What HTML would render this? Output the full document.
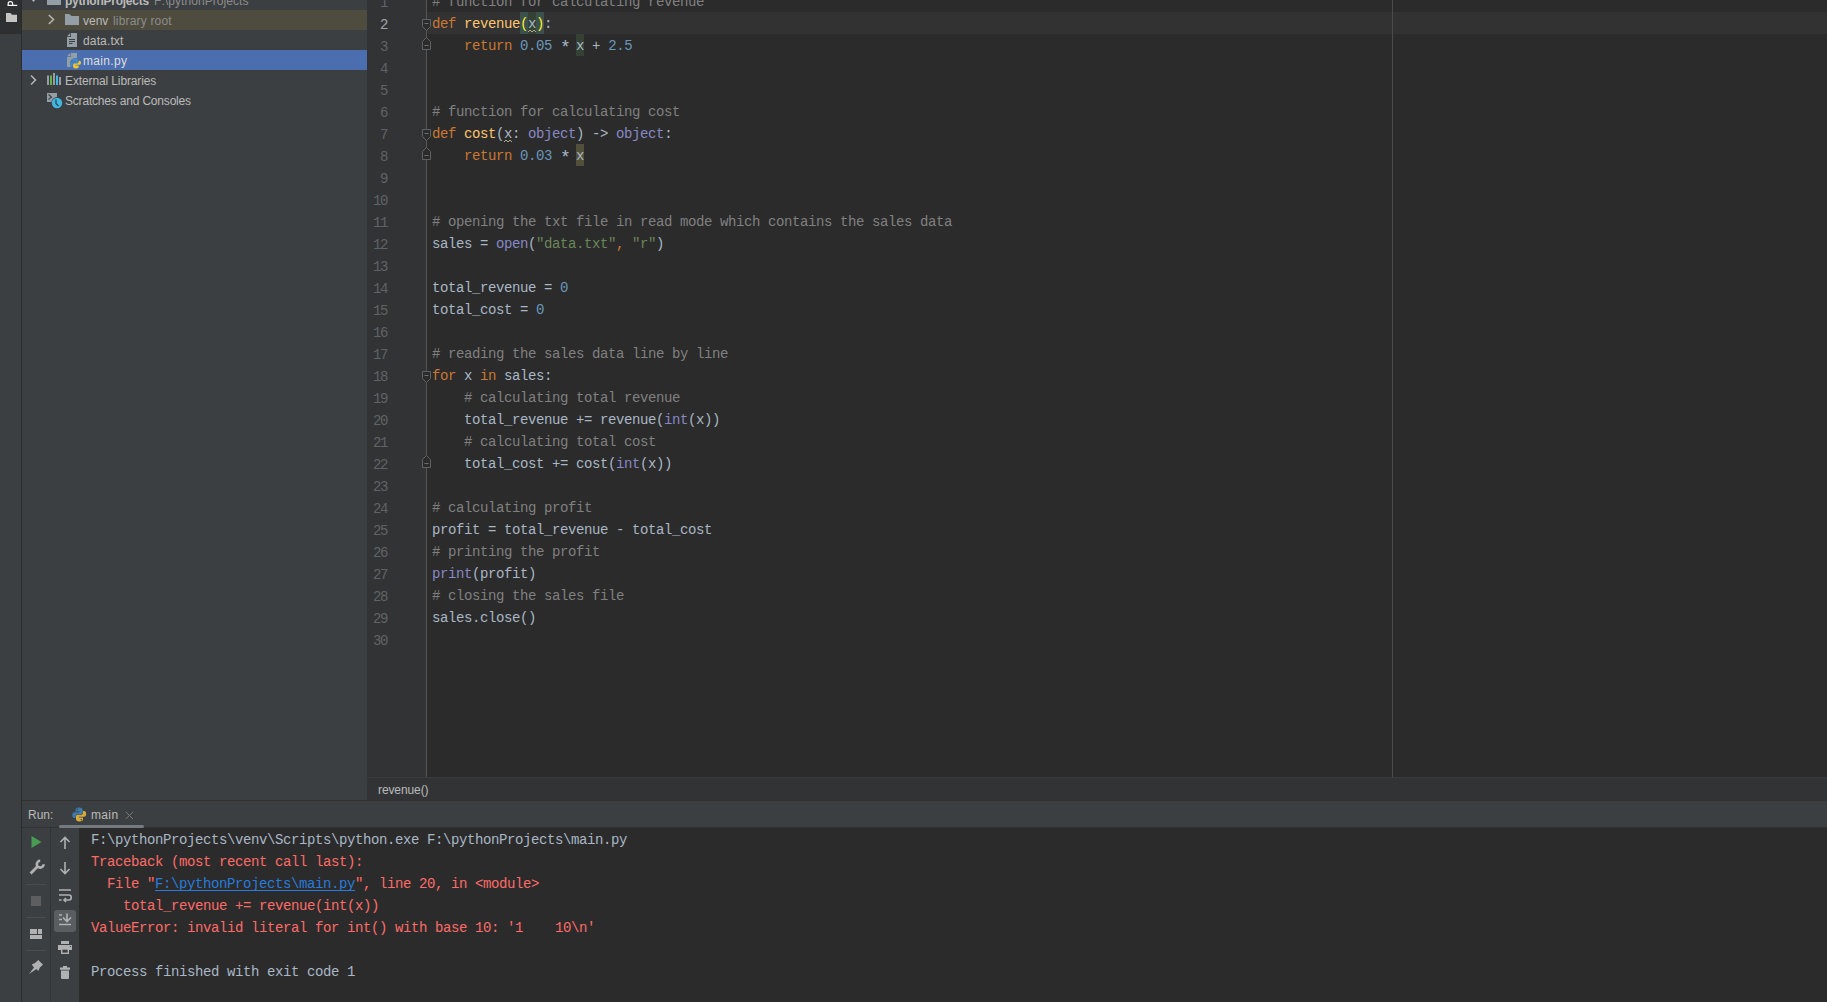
<!DOCTYPE html>
<html><head><meta charset="utf-8">
<style>
*{box-sizing:border-box;margin:0;padding:0}
html,body{width:1827px;height:1002px;overflow:hidden;background:#3c3f41}
body{position:relative;font-family:"Liberation Sans",sans-serif;font-size:12px;color:#bbbbbb}
.a{position:absolute}
.mono{font-family:"Liberation Mono",monospace;font-size:14px;letter-spacing:-0.4px;white-space:pre;line-height:22px}
/* left stripe */
#stripe{left:0;top:0;width:21px;height:1002px;background:#3c3f41}
#stripeSel{left:0;top:0;width:21px;height:34px;background:#2d2f30}
#vsep{left:21px;top:0;width:1px;height:1002px;background:#2b2b2b}
/* project */
#proj{left:22px;top:0;width:345px;height:800px;background:#3c3f41}
.row{position:absolute;left:22px;width:345px;height:20px;line-height:20px;white-space:pre;}
/* editor */
#gutter{left:367px;top:0;width:60px;height:777px;background:#313335}
#editor{left:427px;top:0;width:1400px;height:777px;background:#2b2b2b}
#curline{left:427px;top:12px;width:1400px;height:22px;background:#323232}
#foldline{left:426px;top:0;width:1px;height:777px;background:#555555}
#margin{left:1392px;top:0;width:1px;height:777px;background:#4b4b4b}
.ln{position:absolute;left:367px;width:21px;text-align:right;color:#606366}
.cl{position:absolute;left:432px}
.c{color:#808080}.k{color:#cc7832}.f{color:#ffc66d}.n{color:#6897bb}.s{color:#6a8759}.b{color:#8888c6}.t{color:#a9b7c6}
/* breadcrumb */
#crumb{left:367px;top:777px;width:1460px;height:23px;background:#313335;border-top:1px solid #393b3d}
#hsep{left:22px;top:800px;width:1805px;height:1px;background:#313131}
/* run */
#runhdr{left:22px;top:801px;width:1805px;height:27px;background:#3c3f41}
#console{left:79px;top:828px;width:1748px;height:174px;background:#2b2b2b}
#tsep{left:50px;top:828px;width:1px;height:174px;background:#323232}
.red{color:#ff6b68}
.link{color:#287bde;text-decoration:underline;text-decoration-skip-ink:none;text-underline-offset:2px}

.pm,.xv,.xg,.xy{display:inline-block;height:21px;vertical-align:top}
.pm{color:#ffef28;background:#3b514d;box-shadow:0 -1px 0 #3b514d}
.xv{color:#a9b7c6;background:#344134;box-shadow:0 -1px 0 #344134}
.xg{color:#a9b7c6;background:#344134;box-shadow:0 -1px 0 #344134}
.xy{color:#a9b7c6;background:#52503a;box-shadow:0 -1px 0 #52503a}
.ast{position:relative;top:3px;font-size:18px;letter-spacing:-2.8px;line-height:10px}
.xw{color:#a9b7c6}
.ln2{left:340px;width:47px;text-align:right;font-size:14px;letter-spacing:-1.4px;margin-top:1px}
</style></head>
<body>
<div id="stripe" class="a"></div>
<div id="stripeSel" class="a"></div>
<div id="vsep" class="a"></div>
<div id="proj" class="a"></div>
<!-- stripe icons -->
<svg class="a" style="left:0;top:0" width="21" height="34"><path d="M7.6 5.4 H17.2" stroke="#ffffff" stroke-width="1.2" fill="none"/><path d="M8.2 5.4 V3.6 C8.2 0.9 12.6 0.9 12.6 3.6 V5.4" stroke="#ffffff" stroke-width="1.2" fill="none"/><path d="M6 13 H10.5 L12 14.7 H17 V22 H6 Z" fill="#c4c4c4"/></svg>



<!-- project tree -->
<div class="row" style="top:-10px;"><span class="a" style="left:43px;top:1px;font-weight:bold;color:#bbbbbb;letter-spacing:-0.25px">pythonProjects</span><span class="a" style="left:132px;top:1px;color:#8c8c8c;letter-spacing:0.07px">F:\pythonProjects</span></div>
<div class="row" style="top:10px;background:#4e4b3f"><span class="a" style="left:61px;top:1px;color:#bbbbbb">venv</span><span class="a" style="left:91px;top:1px;color:#8c8c8c;letter-spacing:0.18px">library root</span></div>
<div class="row" style="top:30px;"><span class="a" style="left:61px;top:1px;color:#bbbbbb;letter-spacing:0.14px">data.txt</span></div>
<div class="row" style="top:50px;background:#4b6eaf"><span class="a" style="left:61px;top:1px;color:#dddddd;letter-spacing:0.33px">main.py</span></div>
<div class="row" style="top:70px;"><span class="a" style="left:43px;top:1px;color:#bbbbbb;letter-spacing:-0.12px">External Libraries</span></div>
<div class="row" style="top:90px;"><span class="a" style="left:43px;top:1px;color:#bbbbbb;letter-spacing:-0.19px">Scratches and Consoles</span></div>

<svg class="a" style="left:0;top:0" width="367" height="120">
<path d="M31 -1 L36 -1 L33.5 2 Z" fill="#b4b6b8"/>
<path d="M47 -6 H51.5 L54 -4 H61 V5 H47 Z" fill="#939ea6"/>
<path d="M48.8 15 L53.5 19.5 L48.8 24" fill="none" stroke="#b4b6b8" stroke-width="1.5"/>
<path d="M65 14 H69.3 L71.5 15.9 H79 V25 H65 Z" fill="#939ea6"/>
<path d="M71 33 H77 V47 H67 V37 H71 Z" fill="#939ea6"/><path d="M67 36.3 L70.3 33 V36.3 Z" fill="#939ea6"/>
<path d="M69 39.5 H75 M69 41.5 H75 M69 43.5 H72.5" stroke="#3c3f41" stroke-width="1"/>
<path d="M71 53 H77 V67 H67 V57 H71 Z" fill="#939ea6"/><path d="M67 56.3 L70.3 53 V56.3 Z" fill="#939ea6"/>
<circle cx="75.5" cy="63.5" r="5.5" fill="#4b6eaf"/>
<path d="M75.3 58.5 C73 58.5 72.3 59.3 72.3 60.5 V61.6 H75.6 V62.2 H71.6 C70.6 62.2 70 63 70 64.2 C70 65.5 70.6 66.2 71.6 66.2 H72.4 V64.9 C72.4 64.1 73 63.5 73.8 63.5 H76.5 C77.3 63.5 77.9 62.9 77.9 62.1 V60.5 C77.9 59.3 77 58.5 75.3 58.5 Z" fill="#3d8ccb"/>
<path d="M75.7 68.5 C78 68.5 78.7 67.7 78.7 66.5 V65.4 H75.4 V64.8 H79.4 C80.4 64.8 81 64 81 62.8 C81 61.5 80.4 60.8 79.4 60.8 H78.6 V62.1 C78.6 62.9 78 63.5 77.2 63.5 H74.5 C73.7 63.5 73.1 64.1 73.1 64.9 V66.5 C73.1 67.7 74 68.5 75.7 68.5 Z" fill="#f3c72c"/>
<path d="M31 75.5 L35.5 80 L31 84.5" fill="none" stroke="#b4b6b8" stroke-width="1.5"/>
<rect x="47" y="75.5" width="2" height="9.5" fill="#939ea6"/>
<rect x="50" y="75.5" width="2" height="9.5" fill="#62b543"/>
<rect x="53" y="73" width="2" height="12" fill="#939ea6"/>
<rect x="56" y="75.5" width="2" height="9.5" fill="#40b6e0"/>
<rect x="59" y="77" width="2" height="8" fill="#939ea6"/>
<path d="M47 93 H57 V97 A6.5 6.5 0 0 0 51.3 102 H47 Z" fill="#939ea6"/>
<path d="M48.5 94.5 L51.5 97 L48.5 99.5" fill="none" stroke="#3c3f41" stroke-width="1.1"/>
<circle cx="57" cy="103" r="5.2" fill="#40b6e0"/>
<path d="M56 99.5 V103.5 L58.5 106" fill="none" stroke="#2b4a58" stroke-width="1.3"/>
</svg>
<div id="gutter" class="a"></div>
<div id="editor" class="a"></div>
<div id="curline" class="a"></div>
<div id="margin" class="a"></div>
<div id="foldline" class="a"></div>

<!-- code -->
<div class="a mono ln2" style="top:-9px;color:#606366">1</div>
<div class="a mono" style="left:432px;top:-9px"><span class="c"># function for calculating revenue</span></div>
<div class="a mono ln2" style="top:13px;color:#a4a3a3">2</div>
<div class="a mono" style="left:432px;top:13px"><span class="k">def </span><span class="f">revenue</span><span class="pm">(</span><span class="xv">x</span><span class="pm">)</span><span class="t">:</span></div>
<div class="a mono ln2" style="top:35px;color:#606366">3</div>
<div class="a mono" style="left:432px;top:35px"><span class="t">    </span><span class="k">return </span><span class="n">0.05</span><span class="t"> <span class="ast">*</span> </span><span class="xg">x</span><span class="t"> + </span><span class="n">2.5</span></div>
<div class="a mono ln2" style="top:57px;color:#606366">4</div>
<div class="a mono ln2" style="top:79px;color:#606366">5</div>
<div class="a mono ln2" style="top:101px;color:#606366">6</div>
<div class="a mono" style="left:432px;top:101px"><span class="c"># function for calculating cost</span></div>
<div class="a mono ln2" style="top:123px;color:#606366">7</div>
<div class="a mono" style="left:432px;top:123px"><span class="k">def </span><span class="f">cost</span><span class="t">(</span><span class="xw">x</span><span class="t">: </span><span class="b">object</span><span class="t">) -&gt; </span><span class="b">object</span><span class="t">:</span></div>
<div class="a mono ln2" style="top:145px;color:#606366">8</div>
<div class="a mono" style="left:432px;top:145px"><span class="t">    </span><span class="k">return </span><span class="n">0.03</span><span class="t"> <span class="ast">*</span> </span><span class="xy">x</span></div>
<div class="a mono ln2" style="top:167px;color:#606366">9</div>
<div class="a mono ln2" style="top:189px;color:#606366">10</div>
<div class="a mono ln2" style="top:211px;color:#606366">11</div>
<div class="a mono" style="left:432px;top:211px"><span class="c"># opening the txt file in read mode which contains the sales data</span></div>
<div class="a mono ln2" style="top:233px;color:#606366">12</div>
<div class="a mono" style="left:432px;top:233px"><span class="t">sales = </span><span class="b">open</span><span class="t">(</span><span class="s">&quot;data.txt&quot;</span><span class="k">, </span><span class="s">&quot;r&quot;</span><span class="t">)</span></div>
<div class="a mono ln2" style="top:255px;color:#606366">13</div>
<div class="a mono ln2" style="top:277px;color:#606366">14</div>
<div class="a mono" style="left:432px;top:277px"><span class="t">total_revenue = </span><span class="n">0</span></div>
<div class="a mono ln2" style="top:299px;color:#606366">15</div>
<div class="a mono" style="left:432px;top:299px"><span class="t">total_cost = </span><span class="n">0</span></div>
<div class="a mono ln2" style="top:321px;color:#606366">16</div>
<div class="a mono ln2" style="top:343px;color:#606366">17</div>
<div class="a mono" style="left:432px;top:343px"><span class="c"># reading the sales data line by line</span></div>
<div class="a mono ln2" style="top:365px;color:#606366">18</div>
<div class="a mono" style="left:432px;top:365px"><span class="k">for </span><span class="t">x </span><span class="k">in </span><span class="t">sales:</span></div>
<div class="a mono ln2" style="top:387px;color:#606366">19</div>
<div class="a mono" style="left:432px;top:387px"><span class="c">    # calculating total revenue</span></div>
<div class="a mono ln2" style="top:409px;color:#606366">20</div>
<div class="a mono" style="left:432px;top:409px"><span class="t">    total_revenue += revenue(</span><span class="b">int</span><span class="t">(x))</span></div>
<div class="a mono ln2" style="top:431px;color:#606366">21</div>
<div class="a mono" style="left:432px;top:431px"><span class="c">    # calculating total cost</span></div>
<div class="a mono ln2" style="top:453px;color:#606366">22</div>
<div class="a mono" style="left:432px;top:453px"><span class="t">    total_cost += cost(</span><span class="b">int</span><span class="t">(x))</span></div>
<div class="a mono ln2" style="top:475px;color:#606366">23</div>
<div class="a mono ln2" style="top:497px;color:#606366">24</div>
<div class="a mono" style="left:432px;top:497px"><span class="c"># calculating profit</span></div>
<div class="a mono ln2" style="top:519px;color:#606366">25</div>
<div class="a mono" style="left:432px;top:519px"><span class="t">profit = total_revenue - total_cost</span></div>
<div class="a mono ln2" style="top:541px;color:#606366">26</div>
<div class="a mono" style="left:432px;top:541px"><span class="c"># printing the profit</span></div>
<div class="a mono ln2" style="top:563px;color:#606366">27</div>
<div class="a mono" style="left:432px;top:563px"><span class="b">print</span><span class="t">(profit)</span></div>
<div class="a mono ln2" style="top:585px;color:#606366">28</div>
<div class="a mono" style="left:432px;top:585px"><span class="c"># closing the sales file</span></div>
<div class="a mono ln2" style="top:607px;color:#606366">29</div>
<div class="a mono" style="left:432px;top:607px"><span class="t">sales.close()</span></div>
<div class="a mono ln2" style="top:629px;color:#606366">30</div>
<svg class="a" style="left:0;top:0" width="1827" height="777"><path d="M422.5 19.5 H430.5 V26.5 L426.5 30.5 L422.5 26.5 Z" fill="#2b2b2b" stroke="#5f6163" stroke-width="1"/><path d="M424.5 23.5 H428.5" stroke="#6e7072" stroke-width="1"/><path d="M426.5 37.5 L430.5 41.5 V49.5 H422.5 V41.5 Z" fill="#2b2b2b" stroke="#5f6163" stroke-width="1"/><path d="M424.5 45.5 H428.5" stroke="#6e7072" stroke-width="1"/><path d="M422.5 129.5 H430.5 V136.5 L426.5 140.5 L422.5 136.5 Z" fill="#2b2b2b" stroke="#5f6163" stroke-width="1"/><path d="M424.5 133.5 H428.5" stroke="#6e7072" stroke-width="1"/><path d="M426.5 147.5 L430.5 151.5 V159.5 H422.5 V151.5 Z" fill="#2b2b2b" stroke="#5f6163" stroke-width="1"/><path d="M424.5 155.5 H428.5" stroke="#6e7072" stroke-width="1"/><path d="M422.5 371.5 H430.5 V378.5 L426.5 382.5 L422.5 378.5 Z" fill="#2b2b2b" stroke="#5f6163" stroke-width="1"/><path d="M424.5 375.5 H428.5" stroke="#6e7072" stroke-width="1"/><path d="M426.5 455.5 L430.5 459.5 V467.5 H422.5 V459.5 Z" fill="#2b2b2b" stroke="#5f6163" stroke-width="1"/><path d="M424.5 463.5 H428.5" stroke="#6e7072" stroke-width="1"/><path d="M528 32.0 L530 30.0 L532 32.0 L534 30.0 L536 32.0" fill="none" stroke="#b3ae88" stroke-width="1"/><path d="M504 142.0 L506 140.0 L508 142.0 L510 140.0 L512 142.0" fill="none" stroke="#b3ae88" stroke-width="1"/></svg>
<div id="crumb" class="a"></div>
<div id="hsep" class="a"></div>
<div id="runhdr" class="a"></div>
<div id="tsep" class="a"></div>
<div id="console" class="a"></div>
<div class="a" style="left:378px;top:780px;height:20px;line-height:20px;color:#bbbbbb;letter-spacing:-0.1px">revenue()</div>
<div class="a" style="left:28px;top:805px;line-height:20px;color:#bbbbbb">Run:</div>
<svg class="a" style="left:72px;top:807px" width="15" height="15"><path d="M7 0.5 C4 0.5 3.5 1.5 3.5 3 V4.5 H7.5 V5.3 H2.5 C1 5.3 0.3 6.5 0.3 8 C0.3 9.8 1 11 2.5 11 H3.8 V9 C3.8 8 4.6 7.2 5.6 7.2 H9 C10 7.2 10.7 6.4 10.7 5.5 V3 C10.7 1.5 9.5 0.5 7 0.5 Z" fill="#3d7aab"/><circle cx="5.3" cy="2.2" r="0.7" fill="#3c3f41"/><path d="M7.5 14.5 C10.5 14.5 11 13.5 11 12 V10.5 H7 V9.7 H12 C13.5 9.7 14.2 8.5 14.2 7 C14.2 5.2 13.5 4 12 4 H10.9 V6 C10.9 7 10.1 7.8 9.1 7.8 H5.7 C4.7 7.8 4 8.6 4 9.5 V12 C4 13.5 5 14.5 7.5 14.5 Z" fill="#d4aa3c"/><circle cx="9.3" cy="12.8" r="0.7" fill="#3c3f41"/></svg>
<div class="a" style="left:91px;top:805px;line-height:20px;color:#bbbbbb;letter-spacing:0.35px">main</div>
<svg class="a" style="left:125px;top:811px" width="9" height="9"><path d="M0.8 0.8 L8 8 M8 0.8 L0.8 8" stroke="#75797c" stroke-width="1"/></svg>
<div class="a" style="left:22px;top:827px;width:1805px;height:1px;background:#323232"></div>
<div class="a" style="left:59px;top:825px;width:85px;height:3px;border-radius:2px;background:#747a80"></div>

<!-- run toolbar -->
<svg class="a" style="left:22px;top:828px" width="57" height="174">
<path d="M9.5 8 L19.5 14 L9.5 20 Z" fill="#499c54"/>
<path d="M8.6 45.4 L15.5 38.5" fill="none" stroke="#afb1b3" stroke-width="2.8" stroke-linecap="butt"/>
<path d="M21.6 36.2 A3.4 3.4 0 1 1 18.2 32.8" fill="none" stroke="#afb1b3" stroke-width="2.6"/>
<rect x="4" y="56" width="20" height="1" fill="#4a4c4e"/>
<rect x="9" y="68" width="10" height="10" fill="#5d5e5f"/>
<rect x="4" y="89" width="20" height="1" fill="#4a4c4e"/>
<path d="M8 101 H15 V106 H8 Z M16 101 H20 V106 H16 Z M8 107 H20 V111 H8 Z" fill="#afb1b3"/>
<rect x="4" y="122" width="20" height="1" fill="#4a4c4e"/>
<path d="M16.2 132 L21 136.6 L18 139.5 L16.2 143 L14.5 141 L7 146 L12 139.5 L9.7 136.6 L13 135 Z" fill="#afb1b3"/>
<rect x="28" y="0" width="1" height="174" fill="#323232"/>
<path d="M43 10 V21 M38.5 14 L43 9.5 L47.5 14" fill="none" stroke="#afb1b3" stroke-width="1.6"/>
<path d="M43 34 V45 M38.5 41 L43 45.5 L47.5 41" fill="none" stroke="#afb1b3" stroke-width="1.6"/>
<path d="M37 62 H49 M37 72 H39.5 M37 67 H47 C50 67 50 72 47 72 H42" fill="none" stroke="#afb1b3" stroke-width="1.6"/><path d="M44 70 L42 72 L44 74" fill="none" stroke="#afb1b3" stroke-width="1.6"/>
<rect x="32" y="82" width="22" height="22" rx="3" fill="#5a5e61"/>
<path d="M37 87 H40 M37 91.5 H40 M37 96.5 H49 M45 85.5 V93.5 M41 89.5 L45 93.5 L49 89.5" fill="none" stroke="#afb1b3" stroke-width="1.6"/>
<path d="M39 113 H47 V116 H39 Z" fill="#afb1b3"/><path d="M36 117 H50 V122 H36 Z" fill="#afb1b3"/><rect x="39.7" y="121" width="6.6" height="4.3" fill="#3c3f41" stroke="#afb1b3" stroke-width="1.4"/><circle cx="48.5" cy="118.5" r="0.6" fill="#3c3f41"/>
<path d="M41 138 H45 V140 H41 Z M38 139.5 H48 V141.8 H38 Z" fill="#afb1b3"/><path d="M39 142.5 H47 V150 Q47 151 46 151 H40 Q39 151 39 150 Z" fill="#afb1b3"/>
</svg>
<div class="a mono" style="left:91px;top:829px;color:#a9b7c6">F:\pythonProjects\venv\Scripts\python.exe F:\pythonProjects\main.py</div>
<div class="a mono red" style="left:91px;top:851px">Traceback (most recent call last):</div>
<div class="a mono" style="left:91px;top:873px"><span class="red">  File "</span><span class="link">F:\pythonProjects\main.py</span><span class="red">", line 20, in &lt;module&gt;</span></div>
<div class="a mono red" style="left:91px;top:895px">    total_revenue += revenue(int(x))</div>
<div class="a mono red" style="left:91px;top:917px">ValueError: invalid literal for int() with base 10: &#x27;1    10\n&#x27;</div>
<div class="a mono" style="left:91px;top:961px;color:#a9b7c6">Process finished with exit code 1</div>
</body></html>
